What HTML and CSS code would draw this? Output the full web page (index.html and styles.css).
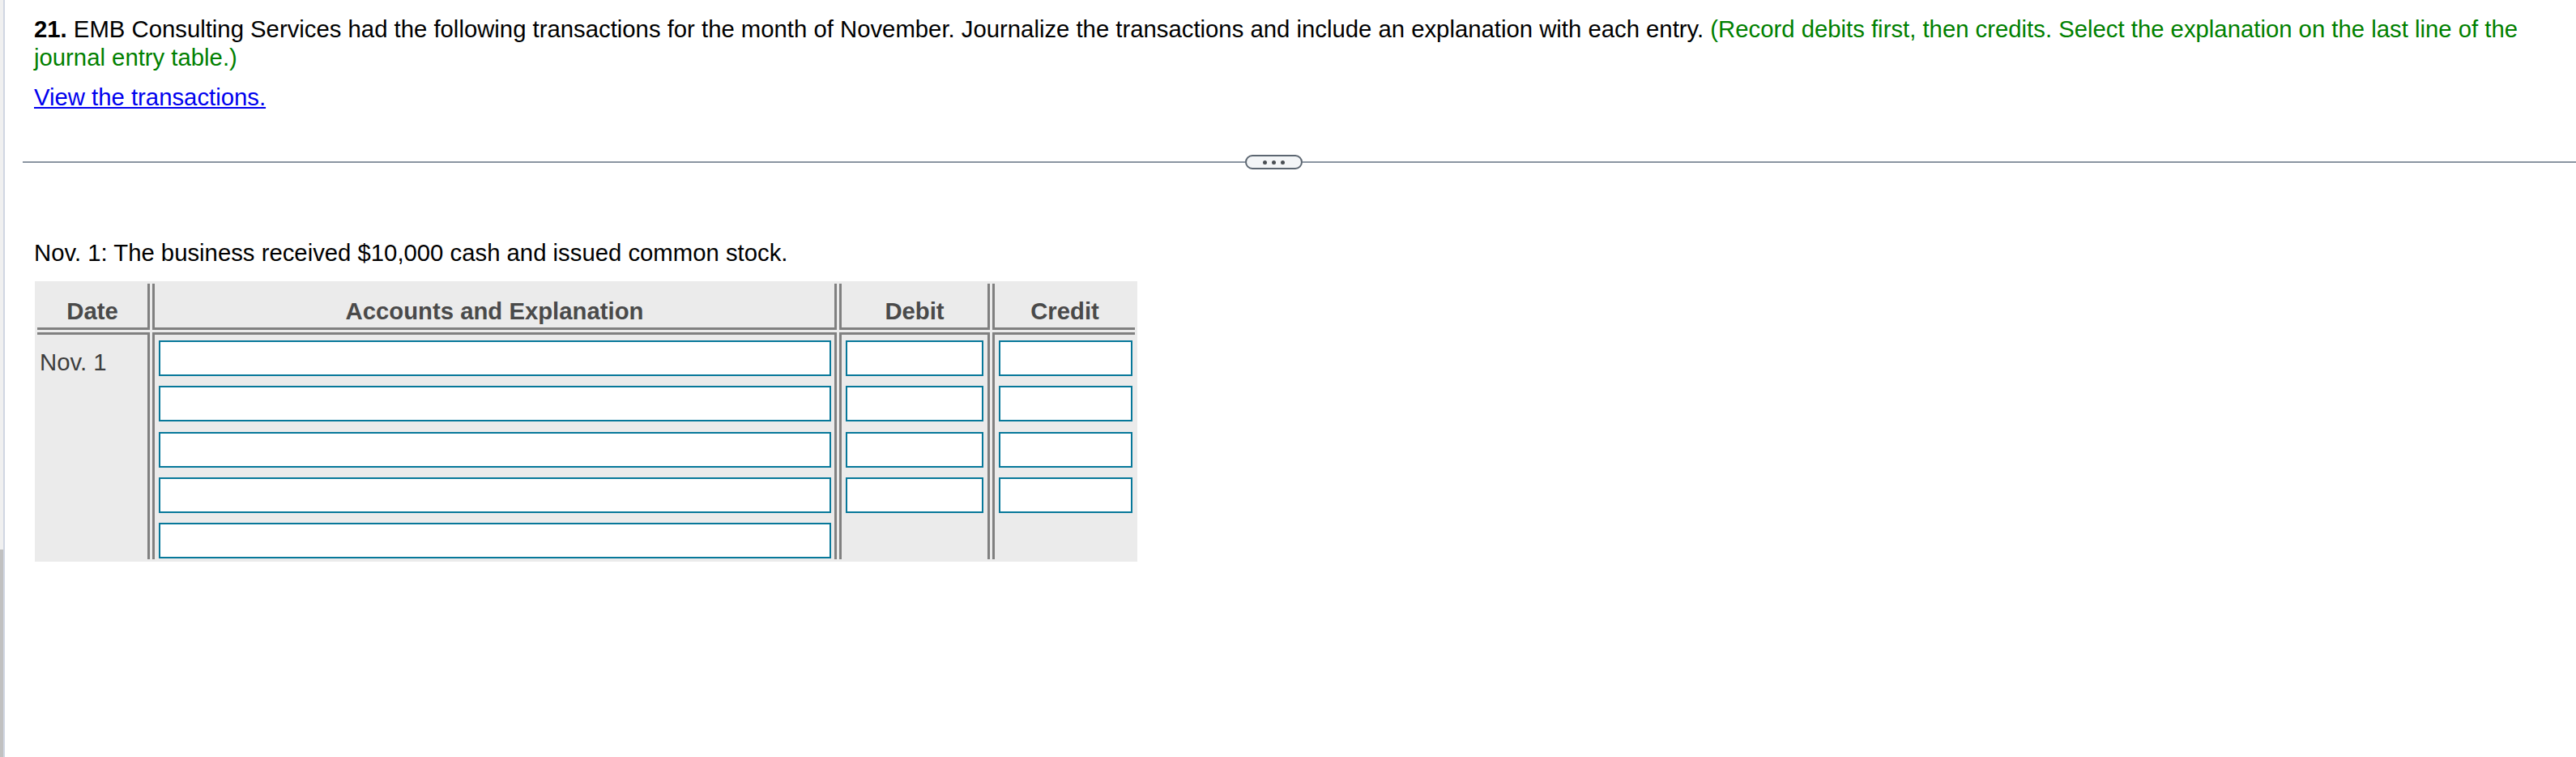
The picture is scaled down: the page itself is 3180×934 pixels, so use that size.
FILE: index.html
```html
<!DOCTYPE html>
<html lang="en">
<head>
<meta charset="utf-8">
<title>Journal entry</title>
<link rel="stylesheet" href="styles.css">
</head>
<body>
<div class="page">
  <div class="edge">
    <div class="edge-top"></div>
    <div class="edge-thumb"></div>
  </div>
  <main class="content">
    <p class="question"><b>21.</b> EMB Consulting Services had the following transactions for the month of November. Journalize the transactions and include an explanation with each entry. <span class="hint">(Record debits first, then credits. Select the explanation on the last line of the journal entry table.)</span></p>
    <div class="link-row"><a href="#" class="link">View the transactions.</a></div>

    <div class="divider">
      <div class="rule rule-left"></div>
      <div class="pill"><span class="dot"></span><span class="dot"></span><span class="dot"></span></div>
      <div class="rule rule-right"></div>
    </div>

    <p class="prompt">Nov. 1: The business received $10,000 cash and issued common stock.</p>

    <div class="journal">
      <div class="hd c-date">Date</div>
      <div class="hd c-acc">Accounts and Explanation</div>
      <div class="hd c-deb">Debit</div>
      <div class="hd c-cred">Credit</div>

      <div class="bd c-date"><span class="date-text">Nov. 1</span></div>
      <div class="bd c-acc">
        <input class="box" type="text" aria-label="Account 1">
        <input class="box" type="text" aria-label="Account 2">
        <input class="box" type="text" aria-label="Account 3">
        <input class="box" type="text" aria-label="Account 4">
        <input class="box" type="text" aria-label="Explanation">
      </div>
      <div class="bd c-deb">
        <input class="box" type="text" aria-label="Debit 1">
        <input class="box" type="text" aria-label="Debit 2">
        <input class="box" type="text" aria-label="Debit 3">
        <input class="box" type="text" aria-label="Debit 4">
      </div>
      <div class="bd c-cred">
        <input class="box" type="text" aria-label="Credit 1">
        <input class="box" type="text" aria-label="Credit 2">
        <input class="box" type="text" aria-label="Credit 3">
        <input class="box" type="text" aria-label="Credit 4">
      </div>
    </div>
  </main>
</div>
</body>
</html>
```

FILE: styles.css
```css
* {
  box-sizing: border-box;
}

html, body {
  margin: 0;
  padding: 0;
  background: #ffffff;
}

body {
  font-family: "Liberation Sans", Arial, Helvetica, sans-serif;
  font-size: 29.3px;
  color: #000000;
}

.page {
  display: flex;
  min-height: 934px;
}

.edge {
  width: 4px;
  flex: 0 0 4px;
  display: flex;
  flex-direction: column;
}

.edge-top {
  height: 678px;
  background: #f0f0f0;
}

.edge-thumb {
  flex: 1;
  background: #c1c1c1;
}

.content {
  flex: 1;
  border-left: 2px solid #d0d6e2;
  padding-top: 18px;
}

.question {
  margin: 0;
  padding: 0 30px 0 36px;
  line-height: 35px;
}

.question b {
  font-weight: bold;
}

.hint {
  color: #008000;
}

.link-row {
  margin-top: 14px;
  padding-left: 36px;
  line-height: 35px;
}

.link {
  color: #0000ee;
  text-decoration: underline;
}

.divider {
  margin-top: 54px;
  margin-left: 22px;
  height: 18px;
  display: flex;
  align-items: center;
}

.rule {
  height: 2px;
  background: #8a95a1;
}

.rule-left {
  flex: 0 0 1509px;
}

.rule-right {
  flex: 1;
}

.pill {
  flex: 0 0 71px;
  height: 18px;
  border: 2px solid #5c6671;
  border-radius: 9px;
  background: #f3f5f7;
  display: flex;
  align-items: center;
  justify-content: center;
  gap: 6px;
}

.dot {
  width: 5px;
  height: 5px;
  border-radius: 50%;
  background: #4a4f54;
}

.prompt {
  margin: 85px 0 0 0;
  padding-left: 36px;
  line-height: 35px;
}

.journal {
  margin: 18px 0 0 37px;
  width: 1361px;
  display: grid;
  grid-template-columns: 139px 845px 186px 176px;
  grid-template-rows: 57px 280px;
  gap: 3px;
  padding: 3px;
  background: #ebebeb;
}

.hd {
  border-bottom: 3px solid #808080;
  font-weight: bold;
  color: #4a4a4a;
  text-align: center;
  line-height: 35px;
  padding-top: 15.5px;
}

.bd {
  border-top: 3px solid #808080;
  padding-top: 7px;
  display: flex;
  flex-direction: column;
  gap: 12.25px;
}

.c-date {
  border-right: 3px solid #808080;
}

.c-acc,
.c-deb {
  border-left: 3px solid #808080;
  border-right: 3px solid #808080;
}

.c-cred {
  border-left: 3px solid #808080;
}

.bd.c-date {
  padding: 16px 0 0 3px;
}

.date-text {
  line-height: 35px;
  color: #3d3d3d;
}

.bd.c-acc {
  padding-left: 5px;
  padding-right: 4px;
}

.bd.c-deb {
  padding-left: 5px;
  padding-right: 5px;
}

.bd.c-cred {
  padding-left: 5px;
  padding-right: 3px;
}

.box {
  display: block;
  width: 100%;
  height: 44px;
  margin: 0;
  padding: 0 6px;
  border: 2px solid #07789a;
  border-radius: 0;
  background: #ffffff;
  font: inherit;
  outline: none;
}
```
